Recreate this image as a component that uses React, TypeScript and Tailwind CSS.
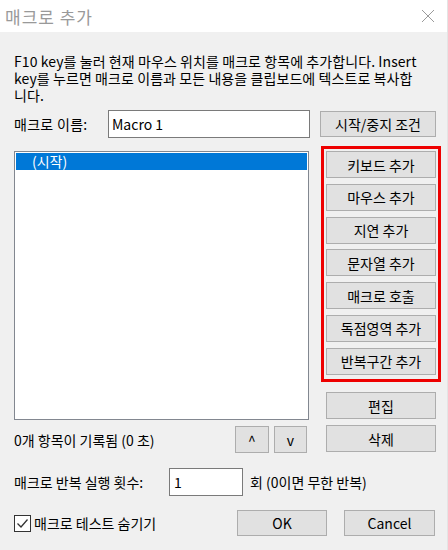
import React from "react";

const Btn = ({ children, className = "" }: { children: React.ReactNode; className?: string }) => (
  <div
    className={`flex items-center justify-center bg-[#e1e1e1] border border-[#adadad] text-[14px] leading-none text-black ${className}`}
  >
    {children}
  </div>
);

export default function App() {
  const addButtons = ["키보드 추가", "마우스 추가", "지연 추가", "문자열 추가", "매크로 호출", "독점영역 추가", "반복구간 추가"];
  return (
    <div className="w-[448px] h-[550px] flex flex-col bg-[#f0f0f0] font-['Noto_Sans_CJK_KR',sans-serif] text-black border-r border-[#e4e4e4] overflow-hidden">
      {/* title bar */}
      <div className="h-[32px] bg-white flex items-center justify-between pl-[5px] pr-[12px] shrink-0">
        <span className="text-[17px] tracking-[1px] text-[#999999] leading-none">매크로 추가</span>
        <svg width="14" height="14" viewBox="0 0 14 14">
          <path d="M1 1 L13 13 M13 1 L1 13" stroke="#9a9a9a" strokeWidth="1" fill="none" />
        </svg>
      </div>

      <div className="flex flex-col pl-[14px] pr-[6px] pt-[21px]">
        {/* description */}
        <div className="text-[14px] leading-[17px] tracking-[0.08px] whitespace-nowrap">
          <div className="h-[17px]">F10 key를 눌러 현재 마우스 위치를 매크로 항목에 추가합니다. Insert</div>
          <div className="h-[17px]">key를 누르면 매크로 이름과 모든 내용을 클립보드에 텍스트로 복사합</div>
          <div className="h-[17px]">니다.</div>
        </div>

        {/* name row */}
        <div className="flex items-center h-[28px] mt-[6px]">
          <span className="w-[94px] text-[14px] leading-none tracking-[0.3px]">매크로 이름:</span>
          <div className="w-[202px] h-[28px] bg-white border border-[#7a7a7a] flex items-center pl-[3px] text-[14px] leading-none">
            Macro 1
          </div>
          <Btn className="ml-[10px] w-[116px] h-[26px]">시작/중지 조건</Btn>
        </div>

        {/* main area */}
        <div className="flex mt-[8px]">
          <div className="w-[296px] flex flex-col">
            <div className="mt-[5px] h-[269px] bg-white border border-[#828790] p-[1px]">
              <div className="h-[17px] bg-[#0078d7] text-white text-[14px] leading-[17px] pl-[16px]">(시작)</div>
            </div>
            <div className="mt-[6px] h-[27px] flex items-center">
              <span className="text-[14px] leading-none">0개 항목이 기록됨 (0 초)</span>
              <Btn className="ml-auto w-[34px] h-[27px] text-[13px]">^</Btn>
              <Btn className="ml-[5px] w-[33px] h-[27px] text-[13px] mr-[2px]">v</Btn>
            </div>
          </div>
          <div className="ml-[12px] flex flex-col">
            <div className="w-[120px] h-[236px] border-[3px] border-[#ee0000] pt-[2px] pl-[2px] flex flex-col gap-[5.8px]">
              {addButtons.map((b) => (
                <Btn key={b} className="w-[110px] h-[27px]">
                  {b}
                </Btn>
              ))}
            </div>
            <Btn className="mt-[10px] ml-[5px] w-[110px] h-[27px]">편집</Btn>
            <Btn className="mt-[6px] ml-[5px] w-[110px] h-[27px]">삭제</Btn>
          </div>
        </div>

        {/* repeat row */}
        <div className="flex items-center h-[28px] mt-[15px]">
          <span className="w-[155px] text-[14px] leading-none">매크로 반복 실행 횟수:</span>
          <div className="w-[74px] h-[28px] bg-white border border-[#7a7a7a] flex items-center pl-[4px] text-[14px] leading-none">
            1
          </div>
          <span className="ml-[7px] text-[14px] leading-none">회 (0이면 무한 반복)</span>
        </div>

        {/* bottom row */}
        <div className="flex items-center mt-[14px] h-[26px]">
          <div className="w-[17px] h-[17px] border border-[#333333] bg-white flex items-center justify-center">
            <svg width="13" height="13" viewBox="0 0 13 13">
              <path d="M1.5 6.5 L5 10 L11.5 2.5" stroke="#333333" strokeWidth="1.3" fill="none" />
            </svg>
          </div>
          <span className="ml-[3px] text-[14px] leading-none">매크로 테스트 숨기기</span>
          <Btn className="ml-auto w-[90px] h-[26px]">OK</Btn>
          <Btn className="ml-[17px] w-[91px] h-[26px] mr-[6px]">Cancel</Btn>
        </div>
      </div>
    </div>
  );
}
